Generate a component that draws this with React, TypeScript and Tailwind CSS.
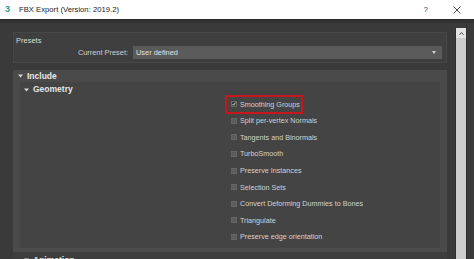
import React from 'react';

const OPTIONS = [
  { label: 'Smoothing Groups', checked: true },
  { label: 'Split per-vertex Normals' },
  { label: 'Tangents and Binormals' },
  { label: 'TurboSmooth' },
  { label: 'Preserve Instances' },
  { label: 'Selection Sets' },
  { label: 'Convert Deforming Dummies to Bones' },
  { label: 'Triangulate' },
  { label: 'Preserve edge orientation' },
];

const Caret = ({ open = true }: { open?: boolean }) => (
  <svg width="5" height="4" viewBox="0 0 5 4" className="shrink-0">
    {open ? <path d="M0 0.5 L5 0.5 L2.5 3.5 Z" fill="#d8d8d8" /> : <path d="M1 0 L4 2 L1 4 Z" fill="#d8d8d8" />}
  </svg>
);

const TitleBar = () => (
  <div className="h-[20px] bg-white flex items-center border-b border-[#2b2b2b] shrink-0">
    <span className="ml-[5px] w-[8px] text-[9px] leading-none font-bold text-[#1b9aa0]">3</span>
    <span className="ml-[6px] text-[7.7px] text-[#1a1a1a] leading-none">FBX Export (Version: 2019.2)</span>
    <span className="ml-auto text-[8px] text-[#333] leading-none">?</span>
    <svg width="8" height="8" viewBox="0 0 8 8" className="ml-[25px] mr-[13px]">
      <path d="M0.5 0.5 L7.5 7.5 M7.5 0.5 L0.5 7.5" stroke="#333" strokeWidth="0.9" />
    </svg>
  </div>
);

const Checkbox = ({ checked }: { checked?: boolean }) => (
  <div
    className={
      'w-[6px] h-[6px] shrink-0 flex items-center justify-center ' +
      (checked ? 'bg-[#3a3a3a] border border-[#6a6a6a]' : 'bg-[#5c5c5c] border border-[#656565]')
    }
  >
    {checked && (
      <svg width="6" height="6" viewBox="0 0 6 6">
        <path d="M0.8 3.2 L2.3 4.8 L5.4 0.8" stroke="#f2f2f2" strokeWidth="1.3" fill="none" />
      </svg>
    )}
  </div>
);

export default function App() {
  return (
    <div className="w-[474px] h-[259px] overflow-hidden flex flex-col font-['Liberation_Sans',Arial,sans-serif]">
      <TitleBar />
      <div className="flex-1 flex bg-[#3a3a3a] min-h-0 border-t-[3px] border-[#333333]">
        {/* main content */}
        <div className="w-[447px] pl-[13px] pt-[9px] flex flex-col shrink-0">
          {/* Presets */}
          <div className="h-[31px] bg-[#3f3f3f] border border-[#474747] flex flex-col shrink-0">
            <div className="h-[12px] pl-[2px] pt-[4px] text-[7.5px] leading-none text-[#dcdcdc]">Presets</div>
            <div className="flex items-center h-[13px] mt-[1px]">
              <div className="w-[114px] text-right text-[7.4px] text-[#cfcfcf] leading-none">Current Preset:</div>
              <div className="ml-[5px] mr-[4px] flex-1 h-[13px] bg-[#5a5a5a] flex items-center pl-[3px] pr-[6px]">
                <span className="text-[7.4px] text-[#e2e2e2] leading-none">User defined</span>
                <svg width="4" height="3" viewBox="0 0 4 3" className="ml-auto">
                  <path d="M0 0 L4 0 L2 3 Z" fill="#d0d0d0" />
                </svg>
              </div>
            </div>
          </div>

          {/* Include section */}
          <div className="mt-[7px] bg-[#4a4a4a] flex flex-col flex-1 min-h-0">
            <div className="h-[12px] flex items-center pl-[5px] gap-[4px] shrink-0">
              <Caret />
              <span className="text-[8.5px] font-bold leading-none text-[#e6e6e6]">Include</span>
            </div>
            <div className="mx-[7px] bg-[#444444] flex flex-col shrink-0">
              <div className="h-[14px] pt-[1px] flex items-center pl-[4px] gap-[4px]">
                <Caret />
                <span className="text-[8.5px] font-bold leading-none text-[#e6e6e6]">Geometry</span>
              </div>
              <div className="flex flex-col pl-[211px] pb-[3px]">
                {OPTIONS.map((opt) => (
                  <div key={opt.label} className="h-[16.6px] flex items-center gap-[3px] relative">
                    <Checkbox checked={opt.checked} />
                    <span className="text-[7.2px] leading-none text-[#d2d2d2] whitespace-nowrap">{opt.label}</span>
                    {opt.checked && (
                      <div className="absolute left-[-6px] top-[-1px] w-[78px] h-[19px] border-[2px] border-[#c8161e]" />
                    )}
                  </div>
                ))}
              </div>
            </div>
            <div className="h-[4px] bg-[#4c4c4c] shrink-0" />
            <div className="bg-[#3e3e3e] flex-1 flex items-end pl-[11px] gap-[4px] overflow-hidden">
              <div className="translate-y-[5px] flex items-center gap-[4px]">
                <Caret />
                <span className="text-[8.5px] font-bold leading-none text-[#e6e6e6]">Animation</span>
              </div>
            </div>
          </div>
        </div>

        {/* scrollbar */}
        <div className="ml-[8px] mt-[5px] w-[11px] bg-[#cdcdcd] border-l border-[#2f2f2f] flex flex-col shrink-0">
          <div className="h-[10px] bg-[#e4e4e4] flex items-center justify-center">
            <svg width="5" height="3" viewBox="0 0 5 3">
              <path d="M0.5 2.7 L2.5 0.6 L4.5 2.7" stroke="#333" strokeWidth="0.9" fill="none" />
            </svg>
          </div>
        </div>
        <div className="flex-1 bg-[#3a3a3a] border-l border-[#2f2f2f]" />
      </div>
    </div>
  );
}
